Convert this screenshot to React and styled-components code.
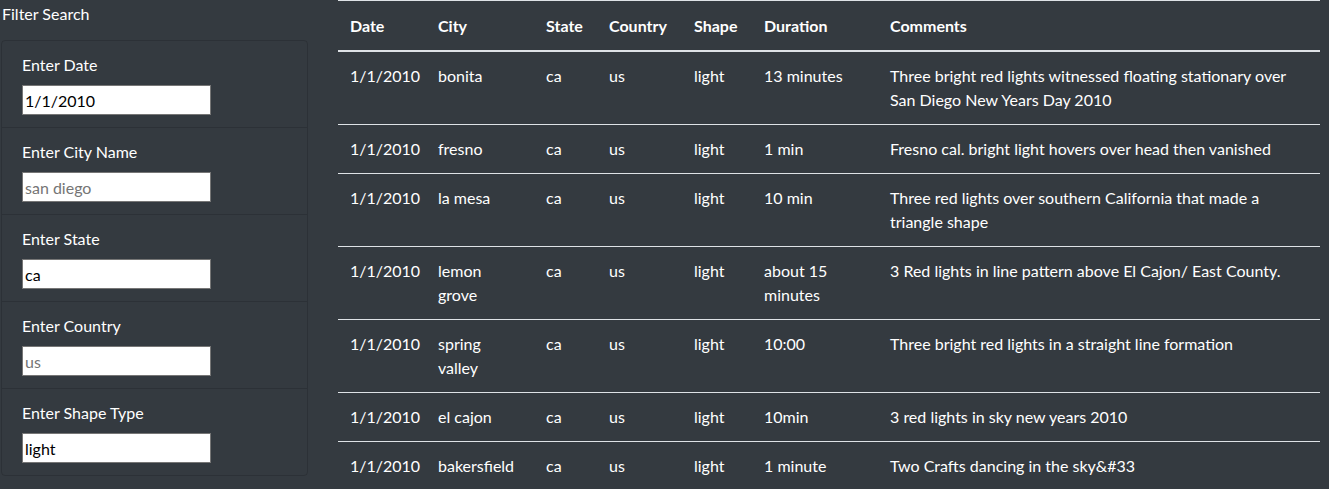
import React from "react";
import styled, { createGlobalStyle } from "styled-components";

const GlobalStyle = createGlobalStyle`
  html, body {
    margin: 0;
    padding: 0;
    background: #343a40;
  }
  body {
    font-family: "Lato", "Noto Sans", sans-serif;
    font-size: 16px;
    line-height: 24px;
    color: #fff;
  }
  * { box-sizing: border-box; }
`;

const Page = styled.div`
  display: flex;
  align-items: flex-start;
  gap: 30px;
  height: 489px;
  overflow: hidden;
`;

const Sidebar = styled.aside`
  width: 308px;
  flex: none;
`;

const SidebarTitle = styled.div`
  padding-left: 2px;
  height: 40px;
  line-height: 27px;
  font-size: 16px;
`;

const FilterList = styled.ul`
  list-style: none;
  margin: 0;
  padding: 0;
  margin-left: 1px;
  border: 1px solid rgba(0, 0, 0, 0.14);
  border-radius: 4px;
`;

const FilterItem = styled.li`
  padding: 12px 20px;
  height: ${(p) => (p.first ? "86px" : "87px")};
  border-top: ${(p) => (p.first ? "none" : "1px solid rgba(0, 0, 0, 0.14)")};
`;

const FilterLabel = styled.label`
  display: block;
  margin-bottom: 8px;
  font-size: 16px;
  line-height: 24px;
`;

const FilterInput = styled.input`
  display: block;
  width: 189px;
  height: 30px;
  border: 1px solid #767676;
  padding: 0 2px;
  font-family: inherit;
  font-size: 16px;
  color: #000;
  background: #fff;
  outline: none;
  &::placeholder {
    color: #757575;
  }
`;

const TableWrap = styled.div`
  width: 982px;
  flex: none;
`;

const Table = styled.table`
  width: 982px;
  table-layout: fixed;
  border-collapse: collapse;
  color: #fff;
`;

const HeadCell = styled.th`
  text-align: left;
  font-weight: 700;
  padding: 13px 12px 12px;
  border-top: 1px solid #dee2e6;
  border-bottom: 2px solid #dee2e6;
  vertical-align: bottom;
`;

const Row = styled.tr`
  border-bottom: ${(p) => (p.last ? "none" : "1px solid #dee2e6")};
`;

const Cell = styled.td`
  padding: 12px;
  vertical-align: top;
`;

const columns = [
  { label: "Date", width: 88 },
  { label: "City", width: 108 },
  { label: "State", width: 63 },
  { label: "Country", width: 85 },
  { label: "Shape", width: 70 },
  { label: "Duration", width: 126 },
  { label: "Comments", width: 442 },
];

const rows = [
  ["1/1/2010", "bonita", "ca", "us", "light", "13 minutes", "Three bright red lights witnessed floating stationary over San Diego New Years Day 2010"],
  ["1/1/2010", "fresno", "ca", "us", "light", "1 min", "Fresno cal. bright light hovers over head then vanished"],
  ["1/1/2010", "la mesa", "ca", "us", "light", "10 min", "Three red lights over southern California that made a triangle shape"],
  ["1/1/2010", "lemon grove", "ca", "us", "light", "about 15 minutes", "3 Red lights in line pattern above El Cajon/ East County."],
  ["1/1/2010", "spring valley", "ca", "us", "light", "10:00", "Three bright red lights in a straight line formation"],
  ["1/1/2010", "el cajon", "ca", "us", "light", "10min", "3 red lights in sky new years 2010"],
  ["1/1/2010", "bakersfield", "ca", "us", "light", "1 minute", "Two Crafts dancing in the sky&#33"],
];

const filters = [
  { label: "Enter Date", value: "1/1/2010" },
  { label: "Enter City Name", placeholder: "san diego" },
  { label: "Enter State", value: "ca" },
  { label: "Enter Country", placeholder: "us" },
  { label: "Enter Shape Type", value: "light" },
];

export default function App() {
  return (
    <>
      <GlobalStyle />
      <Page>
        <Sidebar>
          <SidebarTitle>Filter Search</SidebarTitle>
          <FilterList>
            {filters.map((f, i) => (
              <FilterItem key={f.label} first={i === 0}>
                <FilterLabel>{f.label}</FilterLabel>
                <FilterInput
                  type="text"
                  defaultValue={f.value}
                  placeholder={f.placeholder}
                />
              </FilterItem>
            ))}
          </FilterList>
        </Sidebar>
        <TableWrap>
          <Table>
            <colgroup>
              {columns.map((c) => (
                <col key={c.label} style={{ width: c.width }} />
              ))}
            </colgroup>
            <thead>
              <tr>
                {columns.map((c) => (
                  <HeadCell key={c.label}>{c.label}</HeadCell>
                ))}
              </tr>
            </thead>
            <tbody>
              {rows.map((r, i) => (
                <Row key={i} last={i === rows.length - 1}>
                  {r.map((v, j) => (
                    <Cell key={j}>{v}</Cell>
                  ))}
                </Row>
              ))}
            </tbody>
          </Table>
        </TableWrap>
      </Page>
    </>
  );
}
